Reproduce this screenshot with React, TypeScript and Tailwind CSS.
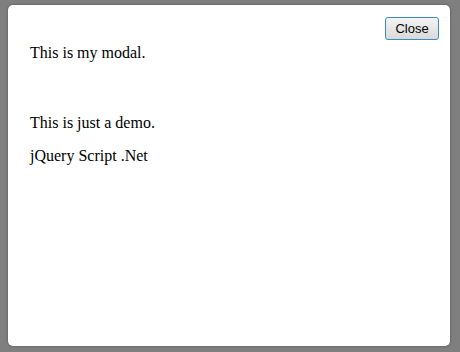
export default function App() {
  return (
    <div className="w-[460px] h-[352px] bg-[#7f7f7f] pt-[5px] pl-[8px]">
      <div className="w-[442px] h-[341px] bg-white rounded-[5px] shadow-[0_0_3px_rgba(0,0,0,0.35)] pt-[12px] pr-[11px] pl-[22px] font-['Liberation_Serif',serif] text-[16px] text-black">
        <div className="flex justify-end">
          <button className="h-[23px] w-[54px] border border-[#3c8db8] rounded-[3px] bg-gradient-to-b from-[#f4f4f4] to-[#d9d9d9] font-['Liberation_Sans',Arial,sans-serif] text-[13px] leading-none text-black">
            Close
          </button>
        </div>
        <p className="mt-[4px] leading-[18px]">This is my modal.</p>
        <br />
        <p className="mt-[28px] leading-[18px]">This is just a demo.</p>
        <p className="mt-[15px] leading-[18px]">jQuery Script .Net</p>
      </div>
    </div>
  )
}
